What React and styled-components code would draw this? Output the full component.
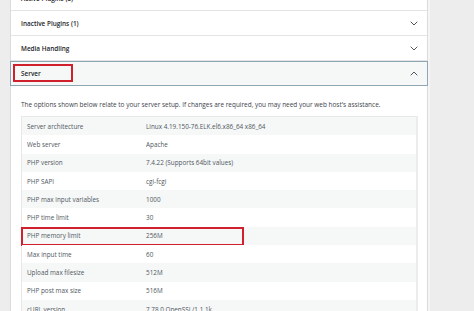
import styled, { createGlobalStyle } from "styled-components";

const GlobalStyle = createGlobalStyle`
  body {
    margin: 0;
    background: #ededee;
    font-family: "Open Sans", "Noto Sans", sans-serif;
  }
`;

const sections = [
  { name: "Active Plugins (3)" },
  { name: "Inactive Plugins (1)" },
  { name: "Media Handling" },
];

const serverInfo = [
  ["Server architecture", "Linux 4.19.150-76.ELK.el6.x86_64 x86_64"],
  ["Web server", "Apache"],
  ["PHP version", "7.4.22 (Supports 64bit values)"],
  ["PHP SAPI", "cgi-fcgi"],
  ["PHP max input variables", "1000"],
  ["PHP time limit", "30"],
  ["PHP memory limit", "256M", true],
  ["Max input time", "60"],
  ["Upload max filesize", "512M"],
  ["PHP post max size", "516M"],
  ["cURL version", "7.78.0 OpenSSL/1.1.1k"],
];

const Chevron = ({ up }) => (
  <svg width="8" height="5" viewBox="0 0 8 5">
    <path
      d={up ? "M0.7 4.3 L4 1 L7.3 4.3" : "M0.7 0.7 L4 4 L7.3 0.7"}
      fill="none"
      stroke="#50575e"
      strokeWidth="1"
    />
  </svg>
);

export default function App() {
  return (
    <Page>
      <GlobalStyle />
      <Panel>
        {sections.map((s) => (
          <Header key={s.name}>
            <HeaderTitle>{s.name}</HeaderTitle>
            <Chevron />
          </Header>
        ))}
        <Header $open>
          <HeaderTitle $marked>Server</HeaderTitle>
          <Chevron up />
        </Header>
        <Content>
          <Intro>
            The options shown below relate to your server setup. If changes are
            required, you may need your web host's assistance.
          </Intro>
          <Table>
            {serverInfo.map(([label, value, marked], i) => (
              <Row key={label} $odd={i % 2 === 0} $marked={marked}>
                <Label>{label}</Label>
                <Value>{value}</Value>
              </Row>
            ))}
          </Table>
        </Content>
      </Panel>
      <Side />
    </Page>
  );
}

const Page = styled.div`
  display: flex;
  align-items: flex-start;
  padding-left: 10px;
  margin-top: -14px;
  height: 340px;
  overflow: hidden;
  background: #ededee;
`;

const Panel = styled.div`
  width: 418px;
  flex-shrink: 0;
  background: #fff;
  border: 1px solid #dcdcde;
  border-top: none;
  box-sizing: border-box;
  min-height: 340px;
`;

const Side = styled.div`
  width: 2px;
  align-self: stretch;
  background: #f5f5f5;
`;

const Header = styled.div`
  height: 25px;
  box-sizing: border-box;
  display: flex;
  align-items: center;
  justify-content: space-between;
  padding: 0 9px 0 10px;
  border-bottom: 1px solid #e4e4e6;
  background: ${(p) => (p.$open ? "#f6f7f7" : "#fff")};
  ${(p) =>
    p.$open &&
    `
    border: 1px solid #8fa7b4;
    margin: 0 -1px;
  `}
`;

const HeaderTitle = styled.span`
  font-size: 6.4px;
  font-weight: 600;
  color: #1d2327;
  position: relative;
  ${(p) =>
    p.$marked &&
    `
    &::after {
      content: "";
      position: absolute;
      left: -8px;
      top: -5px;
      width: 60px;
      height: 18px;
      border: 2px solid #d0202e;
      box-sizing: border-box;
    }
  `}
`;

const Content = styled.div`
  padding: 14px 9px 0 10px;
`;

const Intro = styled.p`
  margin: 0 0 6px;
  font-size: 6.45px;
  line-height: 10px;
  color: #3c434a;
  white-space: nowrap;
`;

const Table = styled.div`
  border: 1px solid #e8e8e8;
  border-right: 2px solid #ececec;
`;

const Row = styled.div`
  height: 18.3px;
  display: grid;
  grid-template-columns: 119px 1fr;
  align-items: center;
  padding-left: 5px;
  background: ${(p) => (p.$odd ? "#f6f7f7" : "#fff")};
  position: relative;
  font-size: 6.35px;
  color: #50575e;
  ${(p) =>
    p.$marked &&
    `
    &::after {
      content: "";
      position: absolute;
      left: -1px;
      top: 0;
      width: 223px;
      height: 19px;
      border: 2px solid #d0202e;
      box-sizing: border-box;
    }
  `}
`;

const Label = styled.span``;

const Value = styled.span``;
